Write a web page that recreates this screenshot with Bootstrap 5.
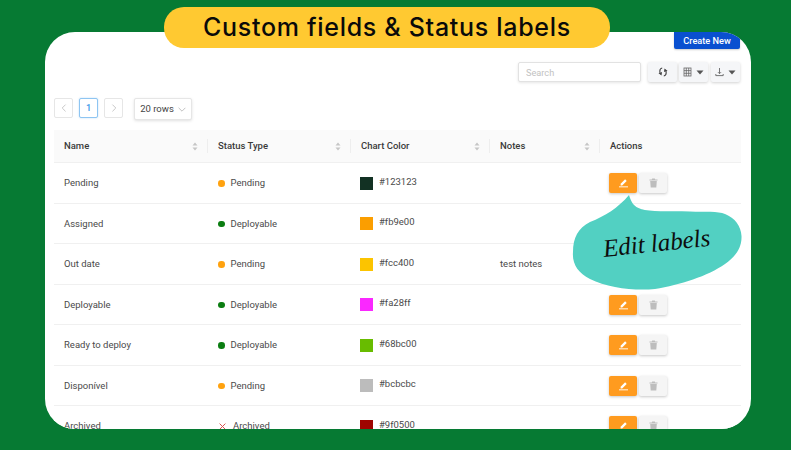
<!DOCTYPE html>
<html lang="en">
<head>
<meta charset="utf-8">
<title>Custom fields &amp; Status labels</title>
<link rel="stylesheet" href="https://cdn.jsdelivr.net/npm/bootstrap@5.3.0/dist/css/bootstrap.min.css">
<style>
html,body{height:450px;overflow:hidden}
body{background:#067a33;font-family:Roboto,"Liberation Sans",sans-serif;color:#444;position:relative}
.title-pill{position:absolute;left:164px;top:7px;width:446px;height:41px;border-radius:20px;background:#ffc931;color:#0a0a0a;font-family:Inter,"Liberation Sans",sans-serif;font-size:25px;font-weight:500;z-index:3;letter-spacing:.7px}
.panel-white{position:absolute;left:45px;top:32px;width:706px;height:397px;background:#fff;border-radius:30px;overflow:hidden;padding:0 11px 0 9px}
.create-btn{width:66px;height:17px;padding:0;border:0;border-radius:0 0 2px 2px;background:#0a50d0;color:#fff;font-size:9.2px;font-weight:500;box-shadow:0 1px 2px rgba(0,0,0,.2);line-height:17px}
.tool-row{margin-top:13px;height:20px}
.search-box{width:123px;height:20px;padding:0 7px;font-size:9.2px;border:1px solid #e2e2e2;border-radius:2px;box-shadow:0 1px 3px rgba(0,0,0,.1);margin-right:7px}
.search-box::placeholder{color:#c2c2c2}
.tool-btn{width:29px;height:20px;padding:0;background:#f5f6f8;border:0;border-radius:2px;box-shadow:0 1px 3px rgba(0,0,0,.18);color:#555}
.tool-btn+.tool-btn{margin-left:2px}
.tool-btn.wide{margin-right:1px}
.pager-row{margin-top:16px;height:22px}
.page-box{width:19px;height:20px;border:1px solid #e6e6e6;border-radius:2px;background:#fff;color:#c4c4c4;font-size:9.2px;margin-right:6px;font-weight:500}
.page-box.current{border-color:#8ec5f2;color:#3f9bea;box-shadow:0 0 2px rgba(63,155,234,.35)}
.rows-select{width:58px;height:22px;margin-left:5px;border:1px solid #e6e6e6;border-radius:2px;box-shadow:0 1px 3px rgba(0,0,0,.12);font-size:9.5px;color:#444;background:#fff;gap:4px}
.data-table{table-layout:fixed;width:687px;margin:10px 0 0;font-size:9.5px;color:#4a4a4a;border-collapse:collapse}
.data-table th{height:32.5px;padding:1px 10px 0;background:#fafafa;font-weight:500;color:#3a3a3a;font-size:9.5px;border-bottom:1px solid #f0f0f0;vertical-align:middle}
.data-table td{height:40.5px;padding:1px 10px 0;border-bottom:1px solid #f0f0f0;vertical-align:middle;background:#fff;color:#4a4a4a}
.w-name{width:154px}.w-status{width:143px}.w-chart{width:139px}.w-notes{width:110px}.w-act{width:141px}
.head-cell{position:relative;height:31px}
.head-cell::after{content:"";position:absolute;right:-10px;top:8px;height:14px;width:1px;background:#eee}
.no-sep::after{display:none}
.status-dot{width:6.5px;height:6.5px;border-radius:50%;margin-right:6px;flex:none}
.dot-pending{background:#ffa20f}.dot-deploy{background:#0b7d12}
.x-mark{margin-right:7px;margin-left:1px;flex:none}
.swatch{width:13px;height:13px;margin-right:6px;flex:none;margin-left:-1px}
.color-code{position:relative;top:-1.5px}
.edit-btn{width:28px;height:20px;padding:0;border:0;border-radius:2px;background:#ff9b1f;box-shadow:0 1px 3px rgba(0,0,0,.22);margin-left:-1px}
.del-btn{width:28px;height:20px;padding:0;border:0;border-radius:2px;background:#f5f5f5;box-shadow:0 1px 3px rgba(0,0,0,.22);margin-left:2px}
.callout{position:absolute;left:0;top:0;width:791px;height:450px;z-index:2;pointer-events:none}
.callout-text{position:absolute;left:603px;top:236px;z-index:3;font-family:"Liberation Serif",serif;font-style:italic;font-size:25px;color:#0d0d0d;transform:rotate(-6deg);transform-origin:left center;line-height:1;white-space:nowrap}
</style>
</head>
<body>
<div class="title-pill d-flex align-items-center justify-content-center">Custom fields &amp; Status labels</div>

<main class="panel-white">
  <div class="d-flex justify-content-end"><button class="btn create-btn" type="button">Create New</button></div>

  <div class="tool-row d-flex justify-content-end align-items-center">
    <input class="form-control search-box" type="text" placeholder="Search">
    <button class="btn tool-btn d-flex align-items-center justify-content-center" type="button" aria-label="Refresh">
      <svg width="10" height="10" viewBox="0 0 10 10" fill="none" stroke="#444" stroke-width="1.1"><path d="M4.200 1C2.700 1.200 1.800 2.600 1.800 4.200c0 1.200.4 2.200 1.200 3"/><path d="M.9 5.900 3.100 7.500l.3-2.400"/><path d="M5.800 9C7.300 8.800 8.200 7.400 8.200 5.800c0-1.200-.4-2.200-1.200-3"/><path d="M9.100 4.100 6.900 2.500l-.3 2.400"/></svg>
    </button>
    <button class="btn tool-btn wide d-flex align-items-center justify-content-center gap-1" type="button" aria-label="Columns">
      <svg width="9" height="10" viewBox="0 0 9 10" fill="none" stroke="#666" stroke-width=".8"><rect x="1" y="1" width="7" height="8"/><path d="M3.300 1v8M5.700 1v8M1 3.600h7M1 6.300h7"/></svg>
      <svg width="8" height="5" viewBox="0 0 8 5"><path d="M.5.5h7L4 4.500z" fill="#555"/></svg>
    </button>
    <button class="btn tool-btn d-flex align-items-center justify-content-center gap-1" type="button" aria-label="Export">
      <svg width="9" height="10" viewBox="0 0 9 10" fill="none" stroke="#666" stroke-width=".9"><path d="M4.500 1v5.500M3 5.200l1.500 1.500L6 5.200M.8 7v1.600h7.400V7"/></svg>
      <svg width="8" height="5" viewBox="0 0 8 5"><path d="M.5.5h7L4 4.500z" fill="#555"/></svg>
    </button>
  </div>

  <div class="pager-row d-flex align-items-start">
    <div class="page-box d-flex align-items-center justify-content-center"><svg width="6" height="8" viewBox="0 0 6 8" fill="none" stroke="#c8c8c8"><path d="M4.600.6 1.200 4l3.400 3.400"/></svg></div>
    <div class="page-box current d-flex align-items-center justify-content-center">1</div>
    <div class="page-box d-flex align-items-center justify-content-center"><svg width="6" height="8" viewBox="0 0 6 8" fill="none" stroke="#c8c8c8"><path d="M1.400.6 4.800 4 1.400 7.400"/></svg></div>
    <div class="rows-select d-flex align-items-center justify-content-center">20 rows <svg width="8" height="5" viewBox="0 0 8 5" fill="none" stroke="#c2c2c2"><path d="M.6.8 4 4.200 7.400.8"/></svg></div>
  </div>

  <table class="table data-table">
    <colgroup><col class="w-name"><col class="w-status"><col class="w-chart"><col class="w-notes"><col class="w-act"></colgroup>
    <thead><tr>
      <th><div class="head-cell d-flex align-items-center justify-content-between">Name<svg width="6" height="9" viewBox="0 0 6 9"><path d="M3 .6 5.500 3.600h-5zM3 8.400.5 5.400h5z" fill="#c6c6c6"/></svg></div></th>
      <th><div class="head-cell d-flex align-items-center justify-content-between">Status Type<svg width="6" height="9" viewBox="0 0 6 9"><path d="M3 .6 5.500 3.600h-5zM3 8.400.5 5.400h5z" fill="#c6c6c6"/></svg></div></th>
      <th><div class="head-cell d-flex align-items-center justify-content-between">Chart Color<svg width="6" height="9" viewBox="0 0 6 9"><path d="M3 .6 5.500 3.600h-5zM3 8.400.5 5.400h5z" fill="#c6c6c6"/></svg></div></th>
      <th><div class="head-cell d-flex align-items-center justify-content-between">Notes<svg width="6" height="9" viewBox="0 0 6 9"><path d="M3 .6 5.500 3.600h-5zM3 8.400.5 5.400h5z" fill="#c6c6c6"/></svg></div></th>
      <th><div class="head-cell no-sep d-flex align-items-center">Actions</div></th>
    </tr></thead>
    <tbody id="rows"></tbody>
  </table>
</main>

<svg class="callout" viewBox="0 0 791 450" aria-hidden="true"><path fill="#52d0c2" d="M629 195C631 202 634 207 641 209C650 212 668 211 690 211.500C705 212 718 211 725 214C735 218 741 226 741.500 236C742 248 735 257 725 264C708 276 680 285 655 289C635 291 608 288 590 279C578 273 572 264 573 252C573 238 578 228 590 222C605 216 618 208 629 195Z"/></svg>
<div class="callout-text">Edit labels</div>

<script>
var rows=[
["Pending","p","Pending","#123123",""],
["Assigned","d","Deployable","#fb9e00",""],
["Out date","p","Pending","#fcc400","test notes"],
["Deployable","d","Deployable","#fa28ff",""],
["Ready to deploy","d","Deployable","#68bc00",""],
["Disponível","p","Pending","#bcbcbc",""],
["Archived","a","Archived","#9f0500",""]];
var edit='<svg width="11" height="10" viewBox="0 0 11 10"><path d="M2.600 6.400 7.100 1.900 8.700 3.500 4.200 8H2.600z" transform="translate(0 -.6)" fill="#fff"/><rect x="1" y="8.400" width="9" height=".9" fill="#fff"/></svg>';
var del='<svg width="9" height="10" viewBox="0 0 9 10"><path d="M3.200.6h2.600l.4.8h2.300v1.100H.5V1.400h2.300zM1.200 3h6.600l-.5 6.400H1.700z" fill="#bdbdbd"/></svg>';
var html="";
rows.forEach(function(r){
 var mark=r[1]=="a"?'<svg class="x-mark" width="7" height="7" viewBox="0 0 7 7" fill="none" stroke="#d9534f" stroke-width="1"><path d="M.6.6l5.800 5.800M6.400.6.600 6.400"/></svg>':'<span class="status-dot '+(r[1]=="p"?"dot-pending":"dot-deploy")+'"></span>';
 html+='<tr><td>'+r[0]+'</td><td><div class="d-flex align-items-center">'+mark+r[2]+'</div></td><td><div class="d-flex align-items-center"><span class="swatch" style="background:'+r[3]+'"></span><span class="color-code">'+r[3]+'</span></div></td><td>'+r[4]+'</td><td><div class="d-flex align-items-center"><button class="btn edit-btn d-flex align-items-center justify-content-center" type="button" aria-label="Edit">'+edit+'</button><button class="btn del-btn d-flex align-items-center justify-content-center" type="button" aria-label="Delete">'+del+'</button></div></td></tr>';
});
document.getElementById("rows").innerHTML=html;
</script>
<script src="https://cdn.jsdelivr.net/npm/bootstrap@5.3.0/dist/js/bootstrap.bundle.min.js"></script>
</body>
</html>
